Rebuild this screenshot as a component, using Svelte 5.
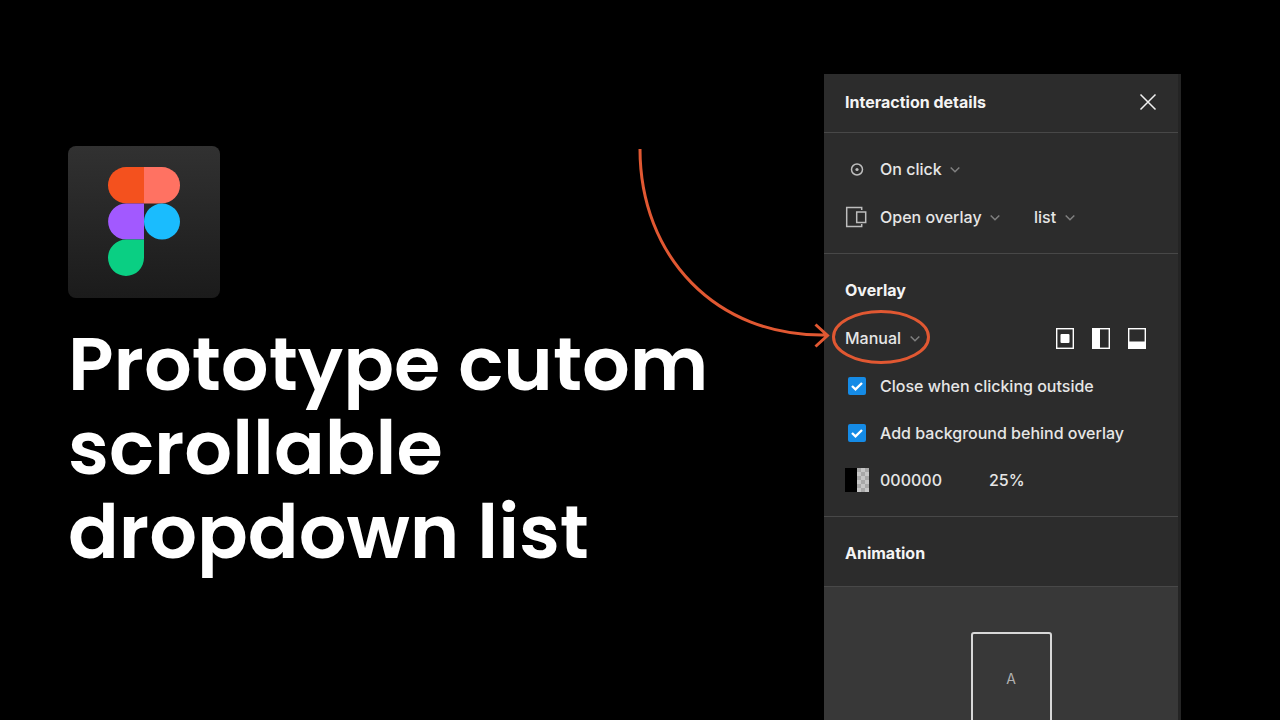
<script>
  const placements = ['Center', 'Left', 'Bottom'];
  let closeOutside = $state(true);
  let addBackground = $state(true);
</script>

{#snippet chevron()}
  <svg class="chevron" viewBox="0 0 10 8" aria-hidden="true"><path d="M.7 2.500 5 6.700 9.300 2.500" /></svg>
{/snippet}

{#snippet dropdown(label, value)}
  <span class="dropdown">
    <select aria-label={label}><option>{value}</option></select>
    {@render chevron()}
  </span>
{/snippet}

<main class="page">
  <section class="intro">
    <div class="logo">
      <svg viewBox="0 0 72 109" role="img" aria-label="Figma">
        <path fill="#f4511e" d="M36 0v36.4H18.2a18.2 18.2 0 0 1 0-36.4z" />
        <path fill="#ff7262" d="M36 0h17.8a18.2 18.2 0 0 1 0 36.4H36z" />
        <path fill="#a259ff" d="M36 36.4v36.2H18.2a18.1 18.1 0 0 1 0-36.2z" />
        <circle fill="#1abcfe" cx="54" cy="54.6" r="18" />
        <path fill="#0acf83" d="M18 72.6h18v18.2a18 18.2 0 1 1-18-18.2z" />
      </svg>
    </div>
    <h1>Prototype cutom scrollable dropdown list</h1>
  </section>

  <aside class="panel">
    <header>
      <h2>Interaction details</h2>
      <button class="close" aria-label="Close">
        <svg viewBox="0 0 18 18"><path d="M1.5 1.5l15 15M16.5 1.5l-15 15" /></svg>
      </button>
    </header>

    <section class="group">
      <div class="row">
        <svg class="icon" viewBox="0 0 24 24" aria-hidden="true">
          <circle cx="12" cy="12.500" r="5.500" /><circle class="dot" cx="12" cy="12.500" r="1.600" />
        </svg>
        {@render dropdown('Trigger', 'On click')}
      </div>
      <div class="row">
        <svg class="icon" viewBox="0 0 24 24" aria-hidden="true">
          <path d="M16.700 5V2.500h-15v19h15V19M11.700 7h9v10.500h-9z" />
        </svg>
        <div class="pair">
          {@render dropdown('Action', 'Open overlay')}
          {@render dropdown('Destination', 'list')}
        </div>
      </div>
    </section>

    <section class="group overlay">
      <h3>Overlay</h3>
      <div class="row position">
        <div class="marked">
          {@render dropdown('Position', 'Manual')}
          <svg class="annotation" viewBox="0 0 300 220" aria-hidden="true">
            <path d="M6 5C6 112 81.500 193 192 191M181.500 180.500 193.500 191.500 181.500 202.500" />
            <ellipse cx="247" cy="193" rx="47.500" ry="25.500" />
          </svg>
        </div>
        <div class="placements">
          {#each placements as name}
            <button aria-label={name}>
              <svg viewBox="0 0 18 21">
                <rect class="frame" x=".7" y=".7" width="16.600" height="19.600" />
                {#if name === 'Center'}
                  <rect x="4.500" y="6" width="9" height="9" rx="1" />
                {:else if name === 'Left'}
                  <rect x="0" y="0" width="8" height="21" />
                {:else}
                  <rect x="0" y="13.500" width="18" height="7.500" />
                {/if}
              </svg>
            </button>
          {/each}
        </div>
      </div>
      <label class="row option">
        <span class="check">
          <input type="checkbox" bind:checked={closeOutside} />
          <svg viewBox="0 0 18 18"><path d="M4 9l3.500 3.300L14 6" /></svg>
        </span>
        Close when clicking outside
      </label>
      <label class="row option">
        <span class="check">
          <input type="checkbox" bind:checked={addBackground} />
          <svg viewBox="0 0 18 18"><path d="M4 9l3.500 3.300L14 6" /></svg>
        </span>
        Add background behind overlay
      </label>
      <div class="row option">
        <span class="swatch"></span>
        <input class="hex" aria-label="Background colour" value="000000" />
        <input class="alpha" aria-label="Background opacity" value="25%" />
      </div>
    </section>

    <section class="group animation"><h3>Animation</h3></section>

    <div class="preview"><div class="frame-a">A</div></div>
  </aside>
</main>

<style>
  :global(body) {
    margin: 0;
    background: #000;
  }

  .page {
    display: grid;
    grid-template-columns: minmax(0, 1fr) 357px;
    box-sizing: border-box;
    height: 100vh;
    padding: 74px 99px 0 68px;
    overflow: hidden;
    background: #000;
    color: #e6e6e6;
    font: 500 16px/24px Inter, 'Liberation Sans', sans-serif;
  }

  h1, h2, h3 {
    margin: 0;
  }

  .intro {
    padding-top: 72px;
  }

  .logo {
    display: flex;
    justify-content: center;
    box-sizing: border-box;
    width: 152px;
    height: 152px;
    padding-top: 21px;
    border-radius: 8px;
    background: linear-gradient(#313131, #1b1b1b);
  }

  .logo svg {
    width: 72px;
    height: 109px;
  }

  h1 {
    max-width: 680px;
    margin-top: 24px;
    color: #fff;
    font: 600 75px/84px Poppins, Inter, sans-serif;
  }

  .panel {
    position: relative;
    display: flex;
    flex-direction: column;
    box-sizing: border-box;
    min-height: 0;
    border-right: 3px solid #242424;
    background: #2c2c2c;
  }

  header, .group {
    flex: none;
    border-bottom: 1px solid #484848;
    padding: 0 21px;
  }

  header {
    display: flex;
    align-items: center;
    justify-content: space-between;
    height: 56px;
    padding-bottom: 2px;
  }

  h2, h3 {
    color: #f4f4f4;
    font-size: 16px;
    font-weight: 700;
    line-height: 24px;
  }

  h3 {
    line-height: 48px;
  }

  button {
    display: grid;
    place-items: center;
    border: 0;
    padding: 0;
    background: none;
  }

  .close svg {
    width: 18px;
    height: 18px;
    fill: none;
    stroke: #f0f0f0;
    stroke-width: 1.5;
  }

  .group {
    padding-block: 12px;
  }

  .overlay {
    padding-bottom: 13px;
  }

  .animation {
    padding-bottom: 9px;
  }

  .row {
    display: flex;
    align-items: center;
    gap: 11px;
    height: 48px;
  }

  .row.option {
    height: 47px;
  }

  .icon {
    width: 24px;
    height: 24px;
    fill: none;
    stroke: #bdbdbd;
    stroke-width: 1.5;
  }

  .icon .dot {
    fill: #bdbdbd;
    stroke: none;
  }

  .pair {
    display: flex;
    gap: 34px;
  }

  .dropdown {
    display: flex;
    align-items: center;
    gap: 8px;
  }

  select {
    appearance: none;
    border: 0;
    padding: 0;
    background: none;
    color: inherit;
    font: inherit;
  }

  .chevron {
    width: 10px;
    height: 8px;
    fill: none;
    stroke: #808080;
    stroke-width: 1.5;
  }

  .position {
    justify-content: space-between;
  }

  .marked {
    position: relative;
  }

  .annotation {
    position: absolute;
    top: -182px;
    left: -211px;
    width: 300px;
    height: 220px;
    overflow: visible;
    fill: none;
    stroke: #e15832;
    stroke-width: 3;
    pointer-events: none;
  }

  .placements {
    display: flex;
    gap: 18px;
    margin-right: 11px;
  }

  .placements svg {
    width: 18px;
    height: 21px;
    fill: #fff;
  }

  .placements .frame {
    fill: none;
    stroke: #fff;
    stroke-width: 1.4;
  }

  .check {
    display: grid;
    width: 24px;
    place-items: center;
  }

  .check input, .check svg {
    grid-area: 1 / 1;
    width: 18px;
    height: 18px;
    margin: 0;
  }

  .check input {
    appearance: none;
    border-radius: 2px;
    background: #4a4a4a;
  }

  .check input:checked {
    background: #158be6;
  }

  .check svg {
    fill: none;
    stroke: #fff;
    stroke-width: 2.4;
    pointer-events: none;
  }

  .check input:not(:checked) + svg {
    visibility: hidden;
  }

  .swatch {
    width: 24px;
    height: 24px;
    background:
      linear-gradient(90deg, #000 50%, transparent 50%),
      repeating-conic-gradient(#a8a8a8 0 25%, #c6c6c6 0 50%) 0 0 / 8px 8px;
  }

  .hex, .alpha {
    border: 0;
    padding: 0;
    background: none;
    color: inherit;
    font: inherit;
  }

  .hex {
    width: 98px;
  }

  .alpha {
    width: 60px;
  }

  .preview {
    display: flex;
    flex: 1;
    justify-content: center;
    min-height: 0;
    padding: 45px 0 0 20px;
    background: #383838;
  }

  .frame-a {
    display: grid;
    place-items: center;
    flex: none;
    box-sizing: border-box;
    width: 81px;
    height: 94px;
    border: 2px solid #d8d8d8;
    border-radius: 3px;
    color: #b0b0b0;
    font-size: 14px;
    font-weight: 400;
  }
</style>
